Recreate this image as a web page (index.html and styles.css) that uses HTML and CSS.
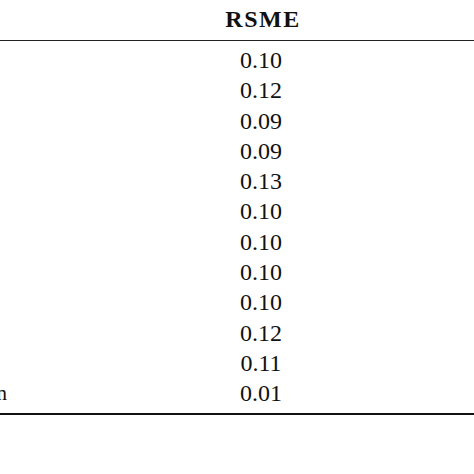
FILE: index.html
```html
<!DOCTYPE html>
<html>
<head>
<meta charset="utf-8">
<link rel="stylesheet" href="styles.css">
</head>
<body>
<div class="tbl">
  <div class="row head"><div class="lab"></div><div class="val">RSME</div><div></div></div>
  <div class="body">
    <div class="row"><div class="lab"></div><div class="val">0.10</div><div></div></div>
    <div class="row"><div class="lab"></div><div class="val">0.12</div><div></div></div>
    <div class="row"><div class="lab"></div><div class="val">0.09</div><div></div></div>
    <div class="row"><div class="lab"></div><div class="val">0.09</div><div></div></div>
    <div class="row"><div class="lab"></div><div class="val">0.13</div><div></div></div>
    <div class="row"><div class="lab"></div><div class="val">0.10</div><div></div></div>
    <div class="row"><div class="lab"></div><div class="val">0.10</div><div></div></div>
    <div class="row"><div class="lab"></div><div class="val">0.10</div><div></div></div>
    <div class="row"><div class="lab"></div><div class="val">0.10</div><div></div></div>
    <div class="row"><div class="lab"></div><div class="val">0.12</div><div></div></div>
    <div class="row"><div class="lab"></div><div class="val">0.11</div><div></div></div>
    <div class="row"><div class="lab label-text">Standard deviation</div><div class="val">0.01</div><div></div></div>
  </div>
</div>
</body>
</html>
```
FILE: styles.css
```css
html, body {
  margin: 0;
  padding: 0;
  background: #fff;
  overflow: hidden;
}
body {
  font-family: "Liberation Serif", "Times New Roman", serif;
  color: #111;
}
.tbl {
  margin-left: -174px;
  width: 648px;
}
.row {
  display: grid;
  grid-template-columns: 253px 364px 1fr;
}
.lab {
  text-align: left;
  white-space: nowrap;
}
.val {
  text-align: center;
}
.head {
  height: 38px;
  line-height: 38px;
  padding-bottom: 2px;
  border-bottom: 1px solid #222;
  font-weight: bold;
  font-size: 24px;
}
.head .val {
  letter-spacing: 1.5px;
  padding-left: 4px;
}
.body {
  padding-top: 4px;
  padding-bottom: 4.4px;
  border-bottom: 2px solid #111;
}
.body .row {
  height: 30.3px;
  line-height: 30.3px;
  font-size: 24px;
}
.label-text {
  font-size: 21px;
  padding-left: 23px;
}
```
